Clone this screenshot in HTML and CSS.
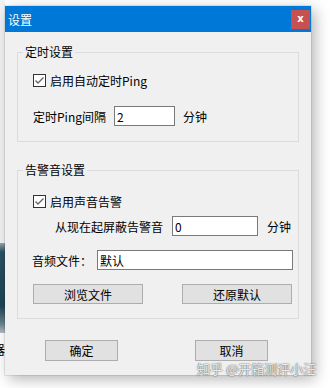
FILE: index.html
```html
<!DOCTYPE html>
<html lang="zh-CN">
<head>
  <meta charset="UTF-8">
  <title>设置</title>
  <link rel="stylesheet" href="styles.css">
</head>
<body>
  <div class="screen">
    <div class="behind">
      <div class="behind-top"></div>
      <div class="behind-photo"></div>
      <div class="behind-text"><span>器</span><span>4</span></div>
    </div>

    <div class="dialog">
      <div class="titlebar">
        <span class="title">设置</span>
        <span class="close">x</span>
      </div>

      <div class="dialog-body">
        <fieldset class="group group-timer">
          <legend>定时设置</legend>
          <label class="check-row">
            <svg class="check" width="13" height="13" viewBox="0 0 13 13">
              <rect x="0.5" y="0.5" width="12" height="12" fill="#fff" stroke="#333"/>
              <polyline points="2.5,6.5 5,9 10.5,3.5" fill="none" stroke="#666" stroke-width="1.4"/>
            </svg>
            启用自动定时Ping
          </label>
          <div class="field-row interval-row">
            <span>定时Ping间隔</span>
            <input class="num-input short" type="text" value="2">
            <span>分钟</span>
          </div>
        </fieldset>

        <fieldset class="group group-alarm">
          <legend>告警音设置</legend>
          <label class="check-row">
            <svg class="check" width="13" height="13" viewBox="0 0 13 13">
              <rect x="0.5" y="0.5" width="12" height="12" fill="#fff" stroke="#333"/>
              <polyline points="2.5,6.5 5,9 10.5,3.5" fill="none" stroke="#666" stroke-width="1.4"/>
            </svg>
            启用声音告警
          </label>
          <div class="field-row mute-row">
            <span>从现在起屏蔽告警音</span>
            <input class="num-input wide" type="text" value="0">
            <span>分钟</span>
          </div>
          <div class="field-row file-row">
            <span>音频文件：</span>
            <input class="num-input file" type="text" value="默认">
          </div>
          <div class="group-buttons">
            <button class="btn btn-big">浏览文件</button>
            <button class="btn btn-big">还原默认</button>
          </div>
        </fieldset>

        <div class="dialog-buttons">
          <button class="btn btn-small">确定</button>
          <button class="btn btn-small">取消</button>
        </div>
      </div>
    </div>

    <div class="watermark">知乎 @开箱测评小汪</div>
  </div>
</body>
</html>
```

FILE: styles.css
```css
* {
  box-sizing: border-box;
}

body {
  margin: 0;
  padding: 0;
  background: #fff;
  font-family: "Noto Sans CJK SC", sans-serif;
  font-size: 12px;
  color: #000;
}

.screen {
  position: relative;
  width: 330px;
  height: 388px;
  display: flex;
  overflow: hidden;
}

/* window behind the dialog, only a sliver shows */
.behind {
  width: 5px;
  display: flex;
  flex-direction: column;
  overflow: hidden;
}

.behind-top {
  height: 243px;
  background: #f2f3f4;
}

.behind-photo {
  height: 90px;
  background: linear-gradient(#9aa7ae, #2a5163 10%, #1c4456 70%, #6c8590 90%, #b8c0c4);
}

.behind-text {
  height: 48px;
  padding-top: 6px;
  display: flex;
  flex-direction: column;
  font-size: 13px;
  line-height: 19px;
}

.behind-text span {
  height: 19px;
  margin-left: -8px;
}

.dialog {
  margin-top: 6px;
  width: 306px;
  height: 369px;
  background: #f0f0f0;
  box-shadow: 0 0 0 1px rgba(0, 0, 0, 0.08), 4px 4px 14px rgba(0, 0, 0, 0.3);
}

.titlebar {
  height: 26px;
  background: #0078d7;
  display: flex;
  align-items: center;
  justify-content: space-between;
  padding: 0 1px 0 3px;
}

.title {
  color: #fff;
  font-size: 12px;
}

.close {
  width: 19px;
  height: 19px;
  background: #c75050;
  color: #fff;
  font-family: "DejaVu Sans", sans-serif;
  font-weight: bold;
  font-size: 10px;
  line-height: 17px;
  text-align: center;
}

.dialog-body {
  padding: 0 12px;
}

.group {
  margin: 0;
  padding: 0 0 14px 0;
  border: 1px solid #dcdcdc;
  min-width: 0;
}

.group legend {
  margin-left: 5px;
  padding: 0 2px;
  line-height: 16px;
}

.group-timer {
  margin-top: 12px;
  padding-bottom: 15px;
}

.group-alarm {
  margin-top: 20px;
}

.check-row {
  display: flex;
  align-items: center;
  gap: 4px;
  height: 20px;
  margin-left: 15px;
}

.group-timer .check-row {
  margin-top: 10px;
}

.group-alarm .check-row {
  margin-top: 13px;
}

.field-row {
  display: flex;
  align-items: center;
  height: 20px;
}

.interval-row {
  margin: 16px 0 0 15px;
  gap: 8px;
}

.mute-row {
  margin: 5px 0 0 37px;
  gap: 9px;
}

.file-row {
  margin: 14px 0 0 14px;
  gap: 5px;
}

.num-input {
  height: 20px;
  border: 1px solid #7a7a7a;
  background: #fff;
  padding: 0 2px;
  font-family: inherit;
  font-size: 12px;
  outline: none;
}

.short {
  width: 61px;
}

.wide {
  width: 86px;
}

.file {
  width: 196px;
}

.group-buttons {
  display: flex;
  gap: 39px;
  margin: 14px 0 0 15px;
}

.btn {
  height: 20px;
  background: #e1e1e1;
  border: 1px solid #adadad;
  font-family: inherit;
  font-size: 12px;
  padding: 0;
  color: #000;
}

.btn-big {
  width: 110px;
}

.dialog-buttons {
  display: flex;
  gap: 77px;
  margin-top: 21px;
  padding-left: 28px;
}

.btn-small {
  width: 73px;
  height: 21px;
}

.watermark {
  position: absolute;
  left: 197px;
  top: 359px;
  font-size: 13px;
  color: rgba(255, 255, 255, 0.9);
  text-shadow: 0 0 1px rgba(0, 0, 0, 0.7), 0 0 2px rgba(0, 0, 0, 0.4);
  white-space: nowrap;
}
```
